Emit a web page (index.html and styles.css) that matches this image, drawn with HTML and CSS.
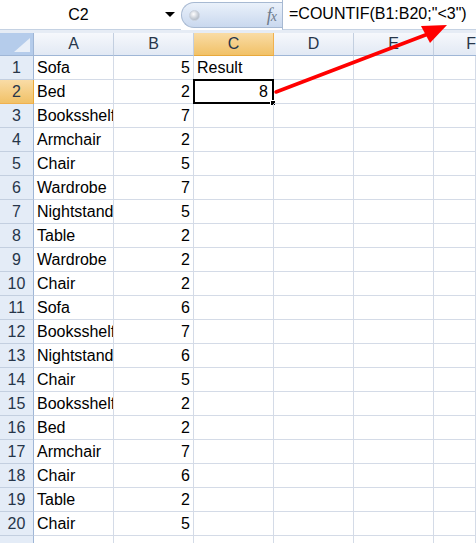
FILE: index.html
```html
<!DOCTYPE html>
<html lang="en">
<head>
<meta charset="UTF-8" />
<title>COUNTIF example</title>
<link rel="stylesheet" href="styles.css">
</head>
<body>
  <div class="formula-bar">
    <div class="name-box">
      <span class="name-value">C2</span>
      <span class="name-arrow"></span>
    </div>
    <div class="fx-pill">
      <span class="pill-dot"></span>
      <span class="fx">f<i>x</i></span>
    </div>
    <div class="formula-input">=COUNTIF(B1:B20;"&lt;3")</div>
  </div>

  <div class="sheet" id="sheet">
    <div class="corner"><span class="corner-tri"></span></div>
    <div class="col-head">A</div>
    <div class="col-head">B</div>
    <div class="col-head active">C</div>
    <div class="col-head">D</div>
    <div class="col-head">E</div>
    <div class="col-head last">F</div>
  </div>

  <svg class="arrow" viewBox="0 0 476 543" aria-hidden="true">
    <line x1="276" y1="92" x2="428" y2="34" stroke="#ff0000" stroke-width="3.5" stroke-linecap="round" />
    <polygon points="447,25 421,26 430,43" fill="#ff0000" />
  </svg>

<script>
  const rows = [
    ['Sofa', 5, 'Result'], ['Bed', 2, 8], ['Booksshelf', 7], ['Armchair', 2],
    ['Chair', 5], ['Wardrobe', 7], ['Nightstand', 5], ['Table', 2],
    ['Wardrobe', 2], ['Chair', 2], ['Sofa', 6], ['Booksshelf', 7],
    ['Nightstand', 6], ['Chair', 5], ['Booksshelf', 2], ['Bed', 2],
    ['Armchair', 7], ['Chair', 6], ['Table', 2], ['Chair', 5], []
  ];
  const sheet = document.getElementById('sheet');

  function cell(cls, text) {
    const d = document.createElement('div');
    d.className = cls;
    if (text !== undefined) d.textContent = text;
    sheet.appendChild(d);
    return d;
  }

  rows.forEach((r, i) => {
    const n = i + 1;
    cell('row-head' + (n === 2 ? ' active' : ''), n <= 20 ? n : '');
    cell('cell text', r[0]);
    cell('cell num', r[1]);
    const c = cell('cell ' + (typeof r[2] === 'number' ? 'num' : 'text'), r[2]);
    if (n === 2) {
      c.classList.add('selected');
      c.appendChild(Object.assign(document.createElement('span'), { className: 'handle' }));
    }
    cell('cell');
    cell('cell');
    cell('cell');
  });
</script>
</body>
</html>
```

FILE: styles.css
```css
*, *::before, *::after {
  box-sizing: border-box;
}

body {
  margin: 0;
  width: 476px;
  height: 543px;
  overflow: hidden;
  position: relative;
  background: #fff;
  font-family: 'Liberation Sans', Arial, sans-serif;
  font-size: 16px;
  color: #000;
}

/* Formula bar */
.formula-bar {
  display: flex;
  height: 33px;
  background: #fff;
  border-bottom: 3px solid #e6ecf5;
}

.name-box {
  width: 181px;
  display: flex;
  align-items: center;
  position: relative;
  border-bottom: 1px solid #c5d2e3;
}

.name-value {
  flex: 1;
  text-align: center;
  padding-right: 22px;
  padding-left: 14px;
}

.name-arrow {
  width: 0;
  height: 0;
  border-left: 5px solid transparent;
  border-right: 5px solid transparent;
  border-top: 5px solid #000;
  margin-right: 6px;
}

.fx-pill {
  width: 101px;
  margin-top: 2px;
  height: 26px;
  border: 1px solid #a7b9d2;
  border-right: none;
  border-radius: 13px 0 0 13px;
  background: linear-gradient(#eaf1fa, #c9d8ee);
  display: flex;
  align-items: center;
  padding-left: 7px;
}

.pill-dot {
  width: 11px;
  height: 11px;
  border-radius: 50%;
  background: radial-gradient(circle at 40% 35%, #ffffff, #b7bfca 70%);
  border: 1px solid #c9d1dc;
}

.fx {
  margin-left: auto;
  margin-right: 6px;
  font-family: 'Liberation Serif', serif;
  font-style: italic;
  font-size: 18px;
  color: #6e7b8c;
  letter-spacing: -1px;
}

.fx i {
  font-size: 14px;
}

.formula-input {
  flex: 1;
  border-left: 1px solid #a7b9d2;
  border-bottom: 1px solid #c5d2e3;
  padding: 5px 0 0 6px;
  white-space: nowrap;
  overflow: hidden;
}

/* Grid */
.sheet {
  display: grid;
  grid-template-columns: 34px repeat(5, 80px) 42px;
  grid-template-rows: 23px;
  grid-auto-rows: 24px;
}

.corner {
  background: #b5cceb;
  border-right: 1px solid #9fb6d6;
  border-bottom: 1px solid #9fb6d6;
  position: relative;
}

.corner-tri {
  position: absolute;
  right: 3px;
  bottom: 3px;
  width: 0;
  height: 0;
  border-left: 16px solid transparent;
  border-bottom: 14px solid #e9eff8;
}

.col-head {
  background: linear-gradient(#f6f8fc, #e2e9f4);
  border-right: 1px solid #c3cfe0;
  border-bottom: 1px solid #9fb6d6;
  text-align: center;
  line-height: 22px;
  color: #27364a;
}

.col-head.last {
  text-align: right;
  padding-right: 0;
  border-right: none;
}

.col-head.active {
  background: linear-gradient(#f9dca6, #f1c167);
  border-right-color: #f0b14f;
  border-bottom-color: #e8a93c;
}

.row-head {
  background: #e4ecf7;
  border-right: 1px solid #9fb6d6;
  border-bottom: 1px solid #c3cfe0;
  text-align: center;
  line-height: 24px;
  color: #27364a;
}

.row-head.active {
  background: linear-gradient(#f9dca6, #f1c167);
  border-right-color: #e8a93c;
  border-bottom-color: #f0b14f;
}

.cell {
  border-right: 1px solid #d4dbe7;
  border-bottom: 1px solid #d4dbe7;
  line-height: 24px;
  white-space: nowrap;
  overflow: hidden;
  position: relative;
}

.cell.text {
  padding-left: 3px;
}

.cell.num {
  text-align: right;
  padding-right: 3px;
}

.cell.text:empty {
  padding: 0;
}

.cell.selected {
  overflow: visible;
  border: 2px solid #000;
  margin: -1px 0 0 -1px;
  line-height: 21px;
  padding-right: 4px;
}

.handle {
  position: absolute;
  right: -4px;
  bottom: -4px;
  width: 6px;
  height: 6px;
  background: #000;
  border: 1px solid #fff;
}

/* Overlay arrow */
.arrow {
  position: absolute;
  left: 0;
  top: 0;
  width: 476px;
  height: 543px;
  pointer-events: none;
}
```
